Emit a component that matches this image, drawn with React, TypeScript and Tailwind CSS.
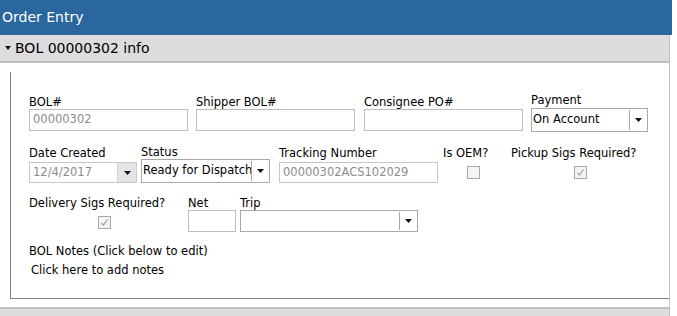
import React from 'react';

const font = { fontFamily: '"DejaVu Sans", Verdana, sans-serif' };

function Arrow() {
  return (
    <svg width="7" height="4" viewBox="0 0 7 4" className="block">
      <path d="M0 0h7L3.5 4z" fill="#111" />
    </svg>
  );
}

function TextBox({ value, width, disabled }: { value?: string; width: string; disabled?: boolean }) {
  return (
    <div
      className={`${width} h-[22px] border border-[#bdbdbd] bg-white px-[3px] flex items-center text-[11.5px] ${
        disabled ? 'text-[#8c8c8c]' : 'text-black'
      }`}
    >
      {value}
    </div>
  );
}

function SelectBox({ value, width, tall }: { value?: string; width: string; tall?: boolean }) {
  return (
    <div className={`${width} ${tall ? 'h-[24px]' : 'h-[22px]'} border border-[#a9a9a9] bg-white flex`}>
      <div className="flex-1 min-w-0 flex items-center pl-[1px] text-[11.5px] text-black whitespace-nowrap overflow-hidden">
        {value}
      </div>
      <div className="w-[18px] flex items-center justify-center border-l border-[#a9a9a9] my-[1px]">
        <Arrow />
      </div>
    </div>
  );
}

function CheckBox({ checked }: { checked?: boolean }) {
  return (
    <div className="w-[13px] h-[13px] border border-[#a8a8a8] bg-[#f4f4f4] flex items-center justify-center">
      {checked && (
        <svg width="9" height="9" viewBox="0 0 9 9">
          <path d="M1.5 5l2 2L7.5 1.5" stroke="#a0a0a0" strokeWidth="1.2" fill="none" />
        </svg>
      )}
    </div>
  );
}

function Label({ children }: { children: React.ReactNode }) {
  return <div className="h-[14px] leading-[16px] text-[11.5px] text-black whitespace-nowrap">{children}</div>;
}

export default function App() {
  return (
    <div className="w-[677px] h-[316px] bg-white overflow-hidden" style={font}>
      <div className="w-[672px] h-[35px] bg-[#2a679e] text-white text-[14px] pl-[2px] flex items-center">
        Order Entry
      </div>

      <div className="w-[670px] border-r border-[#c0c0c0]">
        <div className="h-[28px] bg-[#dddddd] border-b-2 border-[#c0c0c0] flex items-center pl-[5px] text-[14px] text-black">
          <svg width="6" height="4" viewBox="0 0 6 4" className="mr-[4px]">
            <path d="M0 0h6L3 4z" fill="#111" />
          </svg>
          BOL 00000302 info
        </div>

        <div className="pt-[9px] pl-[10px] pb-[8px]">
          <div className="h-[227px] border-l border-b border-[#808080] pl-[18px] pt-[22px]">
            {/* row 1 */}
            <div className="flex items-start">
              <div className="w-[159px]">
                <Label>BOL#</Label>
                <div className="mt-[1px]">
                  <TextBox value="00000302" width="w-[159px]" disabled />
                </div>
              </div>
              <div className="w-[159px] ml-[8px]">
                <Label>Shipper BOL#</Label>
                <div className="mt-[1px]">
                  <TextBox width="w-[159px]" />
                </div>
              </div>
              <div className="w-[159px] ml-[9px]">
                <Label>Consignee PO#</Label>
                <div className="mt-[1px]">
                  <TextBox width="w-[159px]" />
                </div>
              </div>
              <div className="w-[117px] ml-[8px] -mt-[2px]">
                <Label>Payment</Label>
                <div className="mt-[2px]">
                  <SelectBox value="On Account" width="w-[117px]" tall />
                </div>
              </div>
            </div>

            {/* row 2 */}
            <div className="flex items-start mt-[13px]">
              <div className="w-[108px]">
                <Label>Date Created</Label>
                <div className="mt-[3px] w-[108px] h-[21px] border border-[#c8c8c8] flex">
                  <div className="flex-1 flex items-center px-[3px] text-[11.5px] text-[#8c8c8c]">12/4/2017</div>
                  <div className="w-[19px] bg-[#e4e4e4] border-l border-[#d4d4d4] flex items-center justify-center">
                    <Arrow />
                  </div>
                </div>
              </div>
              <div className="w-[129px] ml-[4px] -mt-[1px]">
                <Label>Status</Label>
                <div className="mt-[1px]">
                  <SelectBox value="Ready for Dispatch" width="w-[129px]" tall />
                </div>
              </div>
              <div className="w-[159px] ml-[9px]">
                <Label>Tracking Number</Label>
                <div className="mt-[3px] w-[159px] h-[21px] border border-[#c8c8c8] px-[3px] flex items-center text-[11.5px] text-[#8c8c8c]">
                  00000302ACS102029
                </div>
              </div>
              <div className="w-[60px] ml-[5px] flex flex-col">
                <Label>Is OEM?</Label>
                <div className="mt-[7px] flex justify-center">
                  <CheckBox />
                </div>
              </div>
              <div className="w-[138px] ml-[8px] flex flex-col">
                <Label>Pickup Sigs Required?</Label>
                <div className="mt-[7px] flex justify-center">
                  <CheckBox checked />
                </div>
              </div>
            </div>

            {/* row 3 */}
            <div className="flex items-start mt-[12px]">
              <div className="w-[151px] flex flex-col">
                <Label>Delivery Sigs Required?</Label>
                <div className="mt-[7px] flex justify-center">
                  <CheckBox checked />
                </div>
              </div>
              <div className="w-[48px] ml-[8px]">
                <Label>Net</Label>
                <div className="mt-[1px]">
                  <TextBox width="w-[48px]" />
                </div>
              </div>
              <div className="w-[178px] ml-[4px]">
                <Label>Trip</Label>
                <div className="mt-[1px]">
                  <SelectBox width="w-[178px]" />
                </div>
              </div>
            </div>

            <div className="mt-[11px]">
              <Label>BOL Notes (Click below to edit)</Label>
            </div>
            <div className="mt-[5px] pl-[2px]">
              <Label>Click here to add notes</Label>
            </div>
          </div>
        </div>

        <div className="h-[10px] bg-[#dddddd] border-t-2 border-[#c0c0c0]" />
      </div>
    </div>
  );
}
